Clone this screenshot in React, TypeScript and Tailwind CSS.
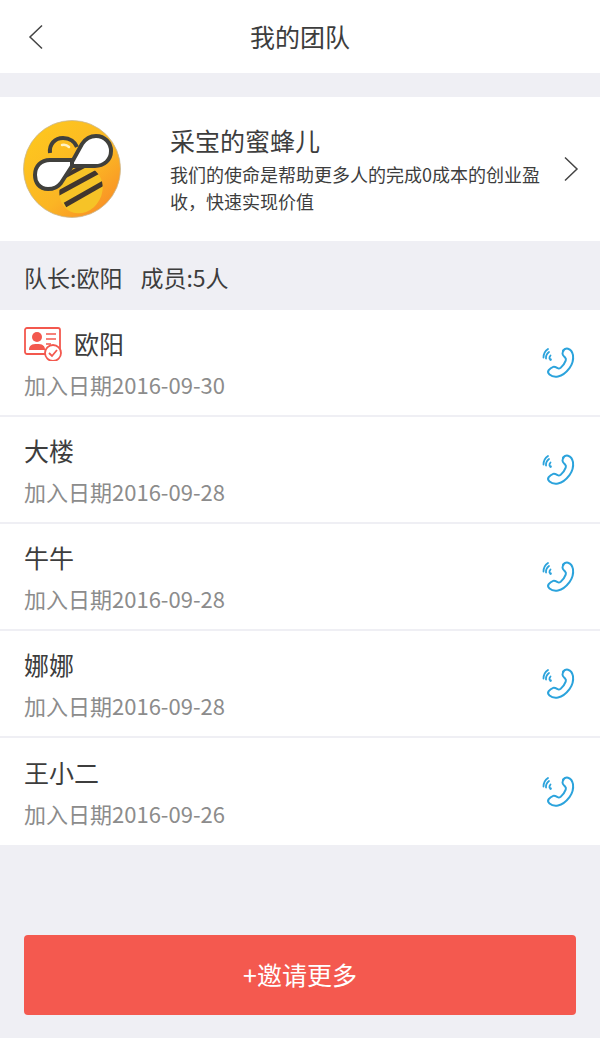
const members = [
  { name: "欧阳", date: "2016-09-30", badge: true },
  { name: "大楼", date: "2016-09-28" },
  { name: "牛牛", date: "2016-09-28" },
  { name: "娜娜", date: "2016-09-28" },
  { name: "王小二", date: "2016-09-26" },
];

function Phone() {
  return (
    <svg width="34" height="34" viewBox="0 0 34 34" fill="none" stroke="#2ba3dc" strokeWidth="2" strokeLinecap="round" strokeLinejoin="round">
      <path d="M21 4.5c1.500-1.500 3.500-2.300 5-1.800 2.500.8 4.500 3.500 5 6.500.6 4.500-.6 9-3.500 13-3 4-7 7.500-11.500 8.300-3 .5-6.500-.2-8.500-2-1.500-1.300-1.800-3-.8-4.300 1-1.300 3-2.800 4.500-3.300 1.500-.5 3 .5 4.500 1.300 1 .5 2 .2 3-.5 2-1.500 4-4.300 5-7 .5-1.300.3-2.300-.6-3.200-1.200-1.200-2.500-2.200-2.600-3.800-.1-1.200.5-2.700 1.500-3.700z" />
      <path d="M7.500 12.500c-.2-1 .3-2.200 1-3" strokeWidth="1.800" />
      <path d="M4 12.500c-.2-2.500.9-5 3-6.500" strokeWidth="1.800" />
      <path d="M1.500 11.500c0-3.500 1.500-6.500 4.500-8.500" strokeWidth="1.800" />
      <path d="M8.500 13.500l.1.100" strokeWidth="2.500" />
    </svg>
  );
}

function Chevron({ left }: { left?: boolean }) {
  return (
    <svg width="16" height="26" viewBox="0 0 16 26" fill="none" stroke="#444" strokeWidth="1.500">
      <path d={left ? "M14 1.500 2 13l12 11.500" : "M2 1.500 14 13 2 24.500"} />
    </svg>
  );
}

function Logo() {
  return (
    <svg width="98" height="98" viewBox="0 0 98 98">
      <defs>
        <linearGradient id="g" x1="0.2" y1="0.1" x2="0.9" y2="0.9">
          <stop offset="0" stopColor="#fdc51f" />
          <stop offset="0.6" stopColor="#fbb524" />
          <stop offset="1" stopColor="#f98f26" />
        </linearGradient>
        <clipPath id="b">
          <ellipse cx="0" cy="0" rx="21" ry="24" transform="translate(58 70) rotate(28)" />
        </clipPath>
      </defs>
      <circle cx="49" cy="49" r="48.500" fill="url(#g)" stroke="#c8b894" strokeWidth="0.800" />
      <g clipPath="url(#b)">
        <rect x="30" y="40" width="60" height="60" fill="#f6c327" />
        <path d="M30 62 62 45M34 74 78 50M42 85 84 61" stroke="#40362e" strokeWidth="5" />
      </g>
      <path d="M27 33c-1-9 5-15 13-15 7 0 12 4 14 9" fill="none" stroke="#40403c" strokeWidth="4" />
      <path d="M39 25q4-1 7 2" fill="none" stroke="#fff3c4" strokeWidth="2.500" strokeLinecap="round" />
      <path d="M49 42 59 24c4-6 9-8 14-8 9 0 15 7 15 15 0 9-7 15-16 15H49z" fill="#fff" stroke="#40403c" strokeWidth="4" strokeLinejoin="round" />
      <path d="M49 46 38 63c-3 4-8 6-13 6-9 0-13-7-13-14 0-9 6-15 15-15h22z" fill="#fff" stroke="#40403c" strokeWidth="4" strokeLinejoin="round" />
    </svg>
  );
}

function Badge() {
  return (
    <svg width="38" height="34" viewBox="0 0 38 34" fill="none">
      <rect x="1" y="1" width="35" height="26" rx="2" stroke="#f3584e" strokeWidth="1.800" />
      <circle cx="13" cy="10" r="5" fill="#f3584e" />
      <path d="M5 23c0-5 3-6 8-6s8 1 8 6z" fill="#f3584e" />
      <path d="M22 7h10M22 12h10M22 17h5" stroke="#f3584e" strokeWidth="1.500" />
      <circle cx="29" cy="26" r="8" fill="#fff" stroke="#f3584e" strokeWidth="1.800" />
      <path d="M25 26l3 3 5-6" stroke="#f3584e" strokeWidth="1.800" />
    </svg>
  );
}

export default function App() {
  return (
    <div
      className="w-[600px] h-[1038px] bg-[#efeff4] flex flex-col overflow-hidden text-[#3d3d3d]"
      style={{ fontFamily: '"Noto Sans CJK SC", "Liberation Sans", sans-serif' }}
    >
      <header className="h-[73px] bg-white flex items-center px-7 relative shrink-0">
        <Chevron left />
        <h1 className="flex-1 text-center text-[25px] font-normal pr-4 leading-none">我的团队</h1>
      </header>

      <section className="mt-6 h-[144px] bg-white flex items-center pl-[23px] pr-[21px] shrink-0">
        <Logo />
        <div className="ml-[49px] flex-1">
          <div className="text-[25px] leading-[34px]">采宝的蜜蜂儿</div>
          <div className="mt-1 text-[18px] leading-[27px] w-[380px]">我们的使命是帮助更多人的完成0成本的创业盈收，快速实现价值</div>
        </div>
        <Chevron />
      </section>

      <div className="h-[69px] px-6 flex items-center pt-1 gap-[18px] text-[23px] shrink-0">
        <span>队长:欧阳</span>
        <span>成员:5人</span>
      </div>

      <ul className="bg-white shrink-0">
        {members.map((m, i) => (
          <li
            key={m.name}
            className={`h-[107px] pl-6 pr-6 flex items-center justify-between ${i < members.length - 1 ? "border-b-2 border-[#efeff4]" : ""}`}
          >
            <div>
              <div className="flex items-center h-[36px] text-[25px] gap-3">
                {m.badge && <Badge />}
                <span>{m.name}</span>
              </div>
              <div className="mt-[7px] text-[22px] leading-[30px] text-[#8c8c8c]">
                加入日期{m.date}
              </div>
            </div>
            <Phone />
          </li>
        ))}
      </ul>

      <div className="flex-1 flex items-end px-6 pb-[23px]">
        <button className="w-full h-[80px] rounded bg-[#f4594f] text-white text-[25px] flex items-center justify-center">
          +邀请更多
        </button>
      </div>
    </div>
  );
}
